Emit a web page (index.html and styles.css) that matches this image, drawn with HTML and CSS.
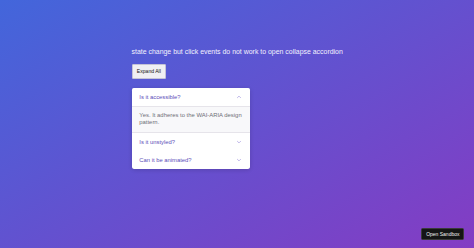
FILE: index.html
```html
<!DOCTYPE html>
<html lang="en">
<head>
<meta charset="utf-8">
<title>Accordion</title>
<link rel="stylesheet" href="styles.css">
</head>
<body>
<main class="page">
  <h1 class="title">state change but click events do not work to open collapse accordion</h1>
  <button class="expand-btn" type="button">Expand All</button>
  <div class="accordion">
    <div class="item">
      <button class="trigger" type="button">
        <span>Is it accessible?</span>
        <svg class="chev chev-open" viewBox="0 0 15 15" aria-hidden="true"><polyline points="3.5,5.75 7.5,9.75 11.5,5.75"/></svg>
      </button>
      <div class="content">Yes. It adheres to the WAI-ARIA design pattern.</div>
    </div>
    <div class="item">
      <button class="trigger" type="button">
        <span>Is it unstyled?</span>
        <svg class="chev" viewBox="0 0 15 15" aria-hidden="true"><polyline points="3.5,5.75 7.5,9.75 11.5,5.75"/></svg>
      </button>
    </div>
    <div class="item">
      <button class="trigger" type="button">
        <span>Can it be animated?</span>
        <svg class="chev" viewBox="0 0 15 15" aria-hidden="true"><polyline points="3.5,5.75 7.5,9.75 11.5,5.75"/></svg>
      </button>
    </div>
  </div>
</main>
<a class="sandbox-btn" href="#">Open Sandbox</a>
</body>
</html>
```
FILE: styles.css
```css
html, body {
  margin: 0;
  height: 100%;
}
body {
  background: linear-gradient(330deg, hsl(272, 53%, 50%) 0%, hsl(226, 68%, 56%) 100%);
  font-family: "Liberation Sans", Arial, sans-serif;
  overflow: hidden;
}
.page {
  display: flex;
  flex-direction: column;
  align-items: flex-start;
  padding: 47.5px 0 0 131.5px;
}
.title {
  margin: 0;
  font-size: 6.95px;
  line-height: 8px;
  font-weight: 400;
  color: #f3f1fd;
  white-space: nowrap;
}
.expand-btn {
  margin-top: 8px;
  height: 15px;
  padding: 0 4.3px;
  font-family: "Liberation Sans", Arial, sans-serif;
  font-size: 5.1px;
  color: #141414;
  background: #f0f0f3;
  border: 1px solid #c4c3d6;
  border-radius: 1px;
}
.accordion {
  margin-top: 9px;
  width: 118.5px;
  background: #e6e4ea;
  border-radius: 2.4px;
  box-shadow: 0 1px 4px rgba(0, 0, 0, 0.16);
  overflow: hidden;
}
.item {
  overflow: hidden;
}
.item + .item {
  margin-top: 0.5px;
}
.trigger {
  display: flex;
  align-items: center;
  justify-content: space-between;
  width: 100%;
  height: 18px;
  padding: 0 8px 0 7.8px;
  border: 0;
  background: #fff;
  font-family: "Liberation Sans", Arial, sans-serif;
  font-size: 5.85px;
  color: #5b4db9;
}
.chev {
  width: 6px;
  height: 6px;
  fill: none;
  stroke: #8a7ad6;
  stroke-width: 1.3;
  stroke-linecap: round;
  stroke-linejoin: round;
}
.chev-open {
  transform: rotate(180deg);
}
.content {
  padding: 5.2px 8px 5.2px 7.8px;
  background: #f8f8fa;
  border-top: 0.5px solid #e6e4ea;
  font-size: 5.9px;
  line-height: 7.6px;
  color: #6f6e77;
}
.sandbox-btn {
  position: fixed;
  right: 9.7px;
  bottom: 8px;
  width: 43px;
  height: 12.5px;
  box-sizing: border-box;
  display: flex;
  align-items: center;
  justify-content: center;
  background: #151515;
  border: 0.5px solid #3a3a3a;
  border-radius: 1.5px;
  color: #f2f2f2;
  font-size: 5px;
  text-decoration: none;
}
```
